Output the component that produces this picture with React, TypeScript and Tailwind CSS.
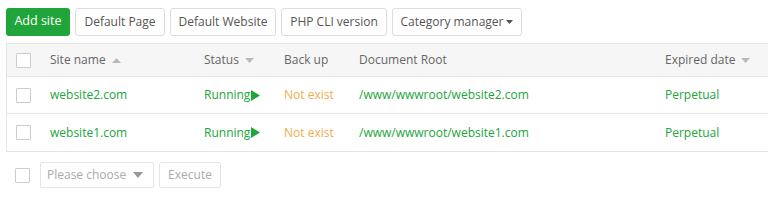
import React from 'react';

const font = { fontFamily: '"Open Sans", "Noto Sans", sans-serif' };

const SortArrow = ({ up }: { up?: boolean }) => (
  <svg className="ml-[6px] inline-block" width="9" height="5" viewBox="0 0 9 5">
    {up ? <path d="M0 5L4.5 0L9 5Z" fill="#bbb" /> : <path d="M0 0L4.5 5L9 0Z" fill="#bbb" />}
  </svg>
);

const Box = () => <span className="block w-[15px] h-[15px] border border-[#ccc] bg-white rounded-[1px]" />;

const cols = 'grid grid-cols-[43px_154px_80px_75px_306px_1fr] items-center';

const rows = [
  { name: 'website2.com', path: '/www/wwwroot/website2.com' },
  { name: 'website1.com', path: '/www/wwwroot/website1.com' },
];

export default function App() {
  return (
    <div className="w-[768px] h-[201px] overflow-hidden bg-white text-[12px]" style={font}>
      {/* toolbar */}
      <div className="flex items-center gap-[5px] pl-[6px] pt-[5px] h-[38px]">
        <button className="h-[28px] w-[64px] rounded-[3px] bg-[#20a53a] text-white text-[12.5px]">Add site</button>
        <button className="h-[28px] w-[90px] rounded-[3px] border border-[#ddd] bg-white text-[#555]">Default Page</button>
        <button className="h-[28px] w-[106px] rounded-[3px] border border-[#ddd] bg-white text-[#555]">Default Website</button>
        <button className="h-[28px] w-[106px] rounded-[3px] border border-[#ddd] bg-white text-[#555]">PHP CLI version</button>
        <button className="h-[28px] w-[130px] rounded-[3px] border border-[#ddd] bg-white text-[#555] flex items-center justify-center">
          Category manager
          <svg className="ml-[3px]" width="7" height="4" viewBox="0 0 7 4"><path d="M0 0L3.5 4L7 0Z" fill="#555" /></svg>
        </button>
      </div>

      {/* table */}
      <div className="ml-[6px] mt-[5px] w-[790px] border border-[#e5e5e5]">
        <div className={`${cols} h-[33px] bg-[#f6f6f6] border-b border-[#e5e5e5] text-[#666]`}>
          <div className="pl-[9px]"><Box /></div>
          <div className="flex items-center">Site name<SortArrow up /></div>
          <div className="flex items-center">Status<SortArrow /></div>
          <div>Back up</div>
          <div>Document Root</div>
          <div className="flex items-center">Expired date<SortArrow /></div>
        </div>
        {rows.map((r, i) => (
          <div key={r.name} className={`${cols} h-[37px] ${i === 0 ? 'border-b border-[#e5e5e5]' : ''}`}>
            <div className="pl-[9px]"><Box /></div>
            <div className="text-[#20a53a]">{r.name}</div>
            <div className="text-[#20a53a] flex items-center">
              Running
              <svg className="ml-[1px]" width="9" height="11" viewBox="0 0 9 11"><path d="M0 0L9 5.5L0 11Z" fill="#20a53a" /></svg>
            </div>
            <div className="text-[#f0ad4e]">Not exist</div>
            <div className="text-[#20a53a]">{r.path}</div>
            <div className="text-[#20a53a]">Perpetual</div>
          </div>
        ))}
      </div>

      {/* batch actions */}
      <div className="flex items-center pl-[15px] mt-[10px] h-[26px]">
        <Box />
        <div className="ml-[10px] w-[114px] h-[26px] border border-[#e5e5e5] rounded-[2px] flex items-center justify-between pl-[6px] pr-[10px] text-[#aaa]">
          <span>Please choose</span>
          <svg width="10" height="6" viewBox="0 0 10 6"><path d="M0 0L5 6L10 0Z" fill="#999" /></svg>
        </div>
        <button className="ml-[5px] h-[26px] w-[62px] border border-[#e5e5e5] rounded-[2px] text-[#aaa] bg-white">Execute</button>
      </div>
    </div>
  );
}
